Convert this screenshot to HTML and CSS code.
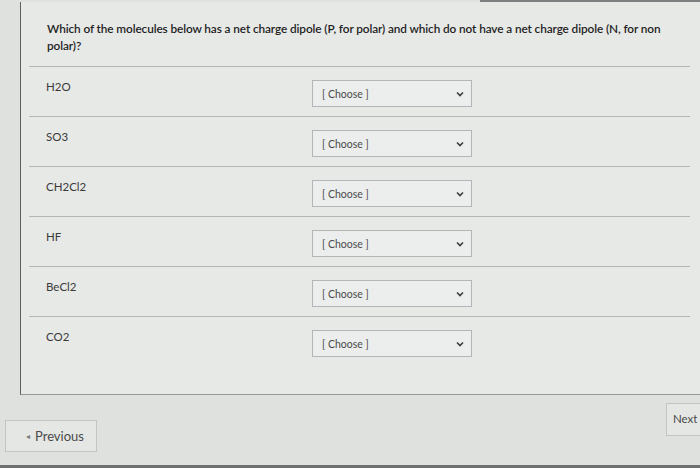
FILE: index.html
```html
<!DOCTYPE html>
<html>
<head>
<meta charset="utf-8">
<link rel="stylesheet" href="styles.css">
</head>
<body>
<div class="page">
  <div class="topline"></div>
  <div class="card">
    <p class="question">Which of the molecules below has a net charge dipole (P, for polar) and which do not have a net charge dipole (N, for non polar)?</p>
    <div class="rows">
      <div class="row"><span class="label">H2O</span><div class="select"><span>[ Choose ]</span><svg viewBox="0 0 8 6" class="chev"><path d="M1 1.5 L4 4.5 L7 1.5" /></svg></div></div>
      <div class="row"><span class="label">SO3</span><div class="select"><span>[ Choose ]</span><svg viewBox="0 0 8 6" class="chev"><path d="M1 1.5 L4 4.5 L7 1.5" /></svg></div></div>
      <div class="row"><span class="label">CH2Cl2</span><div class="select"><span>[ Choose ]</span><svg viewBox="0 0 8 6" class="chev"><path d="M1 1.5 L4 4.5 L7 1.5" /></svg></div></div>
      <div class="row"><span class="label">HF</span><div class="select"><span>[ Choose ]</span><svg viewBox="0 0 8 6" class="chev"><path d="M1 1.5 L4 4.5 L7 1.5" /></svg></div></div>
      <div class="row"><span class="label">BeCl2</span><div class="select"><span>[ Choose ]</span><svg viewBox="0 0 8 6" class="chev"><path d="M1 1.5 L4 4.5 L7 1.5" /></svg></div></div>
      <div class="row"><span class="label">CO2</span><div class="select"><span>[ Choose ]</span><svg viewBox="0 0 8 6" class="chev"><path d="M1 1.5 L4 4.5 L7 1.5" /></svg></div></div>
    </div>
  </div>
  <div class="footer">
    <div class="btn prev"><span class="tri">&#9666;</span> Previous</div>
    <div class="btn next">Next</div>
  </div>
</div>
</body>
</html>
```

FILE: styles.css
```css
* { box-sizing: border-box; }
html, body {
  margin: 0;
  padding: 0;
  width: 700px;
  height: 468px;
  overflow: hidden;
}
body {
  background: #dfe1df;
  font-family: Lato, "Liberation Sans", sans-serif;
  color: #2a2a2a;
}
.page {
  position: relative;
  height: 468px;
  border-bottom: 3px solid #6e7070;
}
.topline {
  height: 2px;
  margin-left: 480px;
  background: #7d7f80;
}
.card {
  margin-left: 20px;
  height: 393px;
  border-left: 1px solid #5e6163;
  border-bottom: 1px solid #979a9b;
  background: #e7e9e7;
  padding-top: 18px;
}
.question {
  margin: 0 0 0 26px;
  width: 630px;
  font-size: 11.8px;
  line-height: 17px;
  color: #1f1f1f;
  font-weight: 600;
  letter-spacing: -0.1px;
  padding-bottom: 12px;
}
.rows {
  margin-left: 8px;
  margin-right: 10px;
}
.row {
  display: flex;
  align-items: flex-start;
  border-top: 1px solid #b4b7b7;
  height: 50px;
  padding-top: 13px;
}
.label {
  width: 283px;
  padding-left: 17px;
  font-size: 11.5px;
  color: #3a3a3a;
}
.select {
  width: 160px;
  height: 27px;
  border: 1px solid #b3b6b7;
  background: #eceeed;
  display: flex;
  align-items: center;
  justify-content: space-between;
  padding: 0 7px 0 9px;
  font-size: 10.5px;
  color: #4a4a4a;
}
.chev {
  width: 8px;
  height: 6px;
  fill: none;
  stroke: #3c3c3c;
  stroke-width: 1.6;
}
.footer {
  display: flex;
  justify-content: space-between;
  align-items: flex-start;
  padding-top: 8px;
}
.btn {
  border: 1px solid #c3c5c5;
  background: #e5e7e5;
  font-size: 13px;
  color: #4a4a4a;
}
.prev {
  margin-top: 17px;
  margin-left: 5px;
  width: 92px;
  height: 32px;
  display: flex;
  align-items: center;
  gap: 5px;
  padding-left: 20px;
}
.tri {
  font-size: 8px;
  color: #777;
}
.next {
  width: 34px;
  height: 33px;
  padding: 8px 0 0 6px;
  border-right: none;
  font-size: 11.5px;
}
```
